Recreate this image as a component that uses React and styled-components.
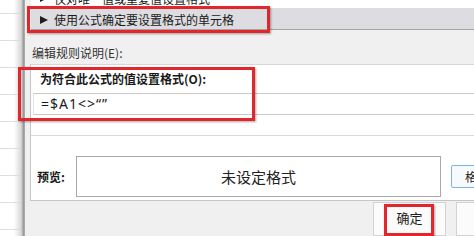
import React from "react";
import styled, { createGlobalStyle } from "styled-components";

const font = `"Noto Sans CJK SC", "Noto Sans", sans-serif`;

const Global = createGlobalStyle`
  html, body {
    margin: 0;
    padding: 0;
    width: 474px;
    height: 236px;
    overflow: hidden;
    background: #ffffff;
  }
`;

const Root = styled.div`
  position: relative;
  display: flex;
  width: 474px;
  height: 236px;
  overflow: hidden;
  font-family: ${font};
  color: #1a1a1a;
`;

const SheetStrip = styled.div`
  flex: 0 0 25px;
  height: 100%;
  background:
    linear-gradient(to right, rgba(255,255,255,0) 0px, rgba(255,255,255,0) 14px, #d9d9d9 21px, #a8a8a8 23px, #8f8f8f 24px, #c4c4c4 25px),
    repeating-linear-gradient(to bottom, #ffffff 0px, #ffffff 13px, #dedede 13px, #dedede 14px, #ffffff 14px, #ffffff 27px);
`;

const Dialog = styled.div`
  flex: 1;
  display: flex;
  flex-direction: column;
  background: #f0f0f0;
  overflow: hidden;
  min-width: 0;
`;

const RuleList = styled.div`
  margin-left: 6px;
  height: 31px;
  background: #ffffff;
  border-bottom: 1px solid #a3a3a3;
  overflow: hidden;
  display: flex;
  flex-direction: column;
`;

const RuleItem = styled.div`
  flex: 0 0 ${(p) => p.$h}px;
  margin-top: ${(p) => p.$offset || 0}px;
  display: flex;
  align-items: center;
  gap: 6px;
  padding-left: 9px;
  font-size: 12px;
  white-space: nowrap;
  background: ${(p) => (p.$selected ? "#dcdce1" : "#ffffff")};
`;

const Arrow = styled.span`
  width: 0;
  height: 0;
  border-left: 8px solid #1e1e1e;
  border-top: 4.5px solid transparent;
  border-bottom: 4.5px solid transparent;
`;

const SectionLabel = styled.div`
  height: 35px;
  padding: 15px 0 0 7px;
  box-sizing: border-box;
  font-size: 12px;
  line-height: 16px;
  color: #333333;
  white-space: nowrap;
`;

const GroupBox = styled.div`
  margin-left: 5px;
  background: #ffffff;
  border-top: 1px solid #d6d6d6;
  border-left: 1px solid #c6c6c6;
  border-bottom: 1px solid #c6c6c6;
  display: flex;
  flex-direction: column;
`;

const GroupTitle = styled.div`
  height: 28px;
  padding-left: 9px;
  font-size: 12px;
  font-weight: bold;
  line-height: 28px;
  white-space: nowrap;
`;

const FormulaInput = styled.div`
  margin-left: 2px;
  height: 20px;
  padding-left: 7px;
  border-top: 1px solid #c9c9c9;
  border-bottom: 1px solid #c9c9c9;
  border-left: 1px solid #e4e4e4;
  font-family: "Noto Sans", "Noto Sans CJK SC", sans-serif;
  font-size: 14px;
  letter-spacing: 1px;
  line-height: 20px;
  white-space: nowrap;
`;

const FormulaRest = styled.div`
  height: 20px;
  border-bottom: 1px solid #d9d9d9;
`;

const PreviewRow = styled.div`
  display: flex;
  align-items: center;
  padding: 20px 0 3px 6px;
`;

const PreviewLabel = styled.div`
  flex: 0 0 39px;
  font-size: 12px;
  font-weight: bold;
`;

const PreviewBox = styled.div`
  flex: 0 0 363px;
  height: 39px;
  border: 1px solid #a9a9a9;
  display: flex;
  align-items: center;
  justify-content: center;
  font-size: 15px;
  color: #222222;
`;

const FormatButton = styled.div`
  flex: 0 0 70px;
  margin-left: 10px;
  height: 21px;
  border: 1px solid #7fb3e6;
  border-radius: 2px;
  background: #f7fafd;
  font-size: 12px;
  line-height: 21px;
  padding-left: 13px;
  white-space: nowrap;
`;

const ButtonBar = styled.div`
  display: flex;
  gap: 10px;
  padding: 1px 0 0 348px;
`;

const Button = styled.div`
  flex: 0 0 71px;
  height: 32px;
  background: #fbfbfb;
  border: 1px solid #d3d3d3;
  font-size: 13px;
  line-height: 30px;
  text-align: center;
`;

const Marker = styled.div`
  position: absolute;
  box-sizing: border-box;
  border: 3px solid #e3262b;
  box-shadow: 1px 1px 2px rgba(0, 0, 0, 0.35);
  pointer-events: none;
`;

const markers = [
  { left: 27, top: 6, width: 243, height: 27 },
  { left: 18, top: 67, width: 237, height: 54 },
  { left: 384, top: 204, width: 50, height: 32 },
];

export default function App() {
  return (
    <>
      <Global />
      <Root>
        <SheetStrip />
        <Dialog>
          <RuleList>
            <RuleItem $h={20} $offset={-12}>
              <Arrow />
              <span>仅对唯一值或重复值设置格式</span>
            </RuleItem>
            <RuleItem $h={23} $selected>
              <Arrow />
              <span>使用公式确定要设置格式的单元格</span>
            </RuleItem>
          </RuleList>
          <SectionLabel>编辑规则说明(E):</SectionLabel>
          <GroupBox>
            <GroupTitle>为符合此公式的值设置格式(O):</GroupTitle>
            <FormulaInput>=$A1&lt;&gt;“”</FormulaInput>
            <FormulaRest />
            <PreviewRow>
              <PreviewLabel>预览:</PreviewLabel>
              <PreviewBox>未设定格式</PreviewBox>
              <FormatButton>格式(F)...</FormatButton>
            </PreviewRow>
          </GroupBox>
          <ButtonBar>
            <Button>确定</Button>
            <Button>取消</Button>
          </ButtonBar>
        </Dialog>
        {markers.map((m, i) => (
          <Marker key={i} style={m} />
        ))}
      </Root>
    </>
  );
}
